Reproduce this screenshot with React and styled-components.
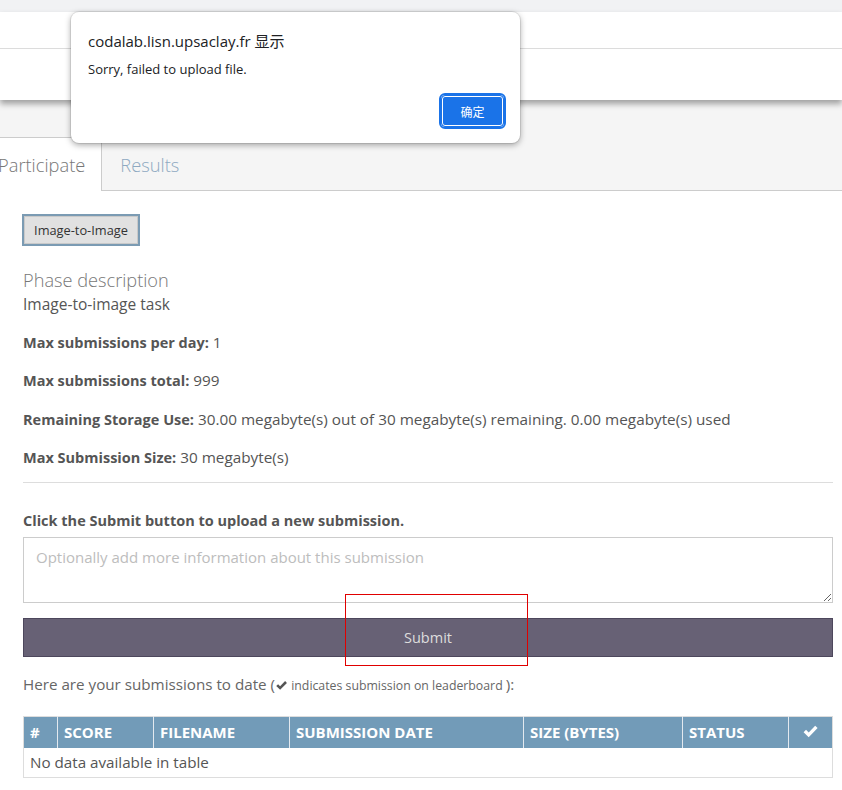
import React from "react";
import styled, { createGlobalStyle } from "styled-components";

const Global = createGlobalStyle`
  html, body { margin: 0; padding: 0; background: #fff; }
  body { font-family: "Open Sans", "Noto Sans", sans-serif; color: #555; overflow: hidden; }
  * { box-sizing: border-box; }
`;

const Page = styled.div`
  position: relative;
  width: 842px;
  height: 790px;
  overflow: hidden;
  background: #fff;
`;

const TopStrip = styled.div`
  height: 12px;
  background: #f1f2f4;
`;

const Header = styled.div`
  position: relative;
  z-index: 1;
  background: #fff;
  box-shadow: 0 4px 6px rgba(0, 0, 0, 0.35);
`;

const NavRow = styled.div`
  height: ${(p) => p.$h}px;
  border-bottom: ${(p) => (p.$line ? "1px solid #dcdcdc" : "none")};
`;

const TabBar = styled.div`
  background: #f5f5f5;
  padding-top: 37px;
  display: flex;
  align-items: flex-end;
  height: 91px;
  border-bottom: 1px solid #ccc;
`;

const Tab = styled.div`
  height: 54px;
  display: flex;
  align-items: center;
  font-size: 18.3px;
  font-weight: 300;
  padding: 0 ${(p) => (p.$active ? "16px" : "18px")} 0 ${(p) => (p.$active ? "0" : "18px")};
  margin-left: ${(p) => (p.$active ? "-2px" : "0")};
  margin-bottom: -1px;
  background: ${(p) => (p.$active ? "#fff" : "transparent")};
  color: ${(p) => (p.$active ? "#777" : "#8ea9c1")};
  border-right: ${(p) => (p.$active ? "1px solid #ccc" : "none")};
  border-top: ${(p) => (p.$active ? "1px solid #ccc" : "none")};
`;

const Content = styled.div`
  padding: 23px 9px 0 23px;
`;

const PhaseButton = styled.button`
  font-family: "Open Sans", sans-serif;
  font-size: 12.8px;
  color: #333;
  background: #e1e1e1;
  border: 2px solid #7b9bb3;
  box-shadow: inset 0 0 0 1px #c9c9c9;
  padding: 0 6px;
  height: 32px;
  width: 118px;
  margin-left: -1px;
  cursor: pointer;
  white-space: nowrap;
`;

const PhaseTitle = styled.div`
  margin-top: 22px;
  font-size: 18.2px;
  font-weight: 300;
  color: #777;
  line-height: 24px;
`;

const Desc = styled.div`
  margin-top: 2px;
  font-size: 15.5px;
  line-height: 20px;
`;

const InfoList = styled.div`
  display: flex;
  flex-direction: column;
  gap: 18px;
  margin-top: 18px;
`;

const Info = styled.div`
  font-size: 15.3px;
  line-height: 20px;
  height: 20.3px;
  white-space: nowrap;
  b { font-weight: 700; font-size: 14.5px; line-height: 1; }
`;

const Rule = styled.hr`
  border: 0;
  border-top: 1px solid #ddd;
  margin: 15px 0 0;
`;

const Prompt = styled.div`
  margin-top: 28px;
  font-size: 14.5px;
  font-weight: 700;
  line-height: 20px;
  color: #555;
`;

const Note = styled.textarea`
  display: block;
  margin-top: 6px;
  width: 810px;
  height: 66px;
  border: 1px solid #ccc;
  padding: 9px 12px;
  font-family: "Open Sans", sans-serif;
  font-size: 15px;
  color: #555;
  resize: vertical;
  outline: none;
  &::placeholder { color: #bdbdbd; }
`;

const Submit = styled.button`
  display: block;
  margin-top: 15px;
  width: 810px;
  height: 39px;
  background: #676175;
  border: 1px solid #4d475c;
  color: #ddd;
  font-family: "Open Sans", sans-serif;
  font-size: 14.5px;
`;

const Caption = styled.div`
  margin-top: 17px;
  font-size: 15.2px;
  line-height: 20px;
  color: #666;
  small { font-size: 12.3px; }
`;

const Table = styled.table`
  margin-top: 20px;
  width: 810px;
  border-collapse: collapse;
  border: 1px solid #ddd;
  font-size: 15.2px;
`;

const Th = styled.th`
  background: #729bb8;
  color: #fff;
  font-weight: 700;
  font-size: 15px;
  text-align: ${(p) => (p.$center ? "center" : "left")};
  padding: 0 6px;
  height: 31px;
  width: ${(p) => p.$w}px;
  border-left: 1px solid #e3e9ef;
  white-space: nowrap;
  &:first-child { border-left: none; }
`;

const Td = styled.td`
  padding: 0 6px;
  height: 30px;
  color: #555;
`;

const Alert = styled.div`
  position: absolute;
  left: 71px;
  top: 12px;
  width: 449px;
  height: 131px;
  background: #fff;
  border-radius: 8px;
  box-shadow: 0 2px 6px rgba(0, 0, 0, 0.35), 0 0 0 1px rgba(0, 0, 0, 0.08);
  padding: 19px 16px 16px 17px;
  display: flex;
  flex-direction: column;
  font-family: "Open Sans", "Noto Sans CJK SC", sans-serif;
  z-index: 5;
`;

const AlertTitle = styled.div`
  font-size: 15px;
  color: #202124;
  line-height: 20px;
`;

const AlertMsg = styled.div`
  margin-top: 10px;
  font-size: 13px;
  color: #202124;
  line-height: 16px;
`;

const AlertActions = styled.div`
  margin-top: auto;
  display: flex;
  justify-content: flex-end;
`;

const OkButton = styled.button`
  width: 63px;
  height: 32px;
  border-radius: 4px;
  background: #1a73e8;
  color: #fff;
  border: 1px solid #1a73e8;
  box-shadow: inset 0 0 0 1px #fff;
  outline: 2px solid #1a73e8;
  outline-offset: 0;
  font-family: "Noto Sans CJK SC", sans-serif;
  font-size: 12px;
`;

const Annotation = styled.div`
  position: absolute;
  left: 345px;
  top: 594px;
  width: 183px;
  height: 72px;
  border: 1px solid #e00000;
  z-index: 4;
  pointer-events: none;
`;

const Check = ({ size = 14, color = "#fff" }) => (
  <svg width={size} height={size} viewBox="0 0 16 16" style={{ verticalAlign: "-2px" }}>
    <path d="M1.5 8.6 L3.8 6.4 L6.3 8.9 L12.4 2.6 L14.7 4.8 L6.3 13.3 Z" fill={color} />
  </svg>
);

export default function App() {
  return (
    <Page>
      <Global />
      <TopStrip />
      <Header>
        <NavRow $h={37} $line />
        <NavRow $h={51} />
      </Header>
      <TabBar>
        <Tab $active>Participate</Tab>
        <Tab>Results</Tab>
      </TabBar>
      <Content>
        <PhaseButton>Image-to-Image</PhaseButton>
        <PhaseTitle>Phase description</PhaseTitle>
        <Desc>Image-to-image task</Desc>
        <InfoList>
          <Info><b>Max submissions per day:</b> 1</Info>
          <Info><b>Max submissions total:</b> 999</Info>
          <Info><b>Remaining Storage Use:</b> 30.00 megabyte(s) out of 30 megabyte(s) remaining. 0.00 megabyte(s) used</Info>
          <Info><b>Max Submission Size:</b> 30 megabyte(s)</Info>
        </InfoList>
        <Rule />
        <Prompt>Click the Submit button to upload a new submission.</Prompt>
        <Note placeholder="Optionally add more information about this submission" />
        <Submit>Submit</Submit>
        <Caption>
          Here are your submissions to date (<small><Check size={13} color="#555" /> indicates submission on leaderboard </small>):
        </Caption>
        <Table>
          <thead>
            <tr>
              <Th $w={34}>#</Th>
              <Th $w={96}>SCORE</Th>
              <Th $w={136}>FILENAME</Th>
              <Th $w={234}>SUBMISSION DATE</Th>
              <Th $w={159}>SIZE (BYTES)</Th>
              <Th $w={106}>STATUS</Th>
              <Th $center><Check size={17} /></Th>
            </tr>
          </thead>
          <tbody>
            <tr>
              <Td colSpan={7}>No data available in table</Td>
            </tr>
          </tbody>
        </Table>
      </Content>
      <Annotation />
      <Alert>
        <AlertTitle>codalab.lisn.upsaclay.fr 显示</AlertTitle>
        <AlertMsg>Sorry, failed to upload file.</AlertMsg>
        <AlertActions>
          <OkButton>确定</OkButton>
        </AlertActions>
      </Alert>
    </Page>
  );
}
